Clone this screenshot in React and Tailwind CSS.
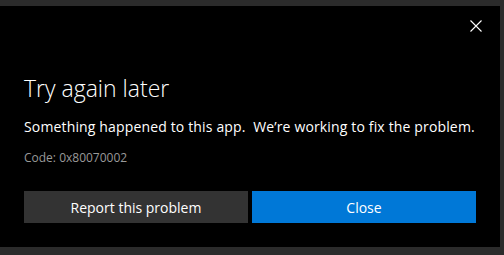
export default function App() {
  return (
    <div className="w-[504px] h-[255px] bg-[#2b2b2b] pt-[6px] overflow-hidden" style={{ fontFamily: '"Segoe UI", "Open Sans", "Noto Sans", sans-serif' }}>
      <div className="w-[500px] h-[241px] bg-black relative flex flex-col px-6">
        <button className="absolute right-[18px] top-[14px] w-3 h-3 flex items-center justify-center">
          <svg width="12" height="12" viewBox="0 0 12 12">
            <path d="M0.5 0.5 L11.5 11.5 M11.5 0.5 L0.5 11.5" stroke="#ffffff" strokeWidth="1.1" />
          </svg>
        </button>
        <h1 className="mt-[66px] text-[23px] leading-[32px] font-light text-white">Try again later</h1>
        <p className="mt-[13px] text-[14px] leading-[20px] tracking-[0.15px] text-white whitespace-nowrap">Something happened to this app.&nbsp; We’re working to fix the problem.</p>
        <p className="mt-[12px] text-[12px] leading-[18px] text-[#999999]">Code: 0x80070002</p>
        <div className="mt-[24px] flex gap-1">
          <button className="w-[224px] h-8 bg-[#333333] text-white text-[14px]">Report this problem</button>
          <button className="w-[224px] h-8 bg-[#0078d7] text-white text-[14px]">Close</button>
        </div>
      </div>
    </div>
  );
}
